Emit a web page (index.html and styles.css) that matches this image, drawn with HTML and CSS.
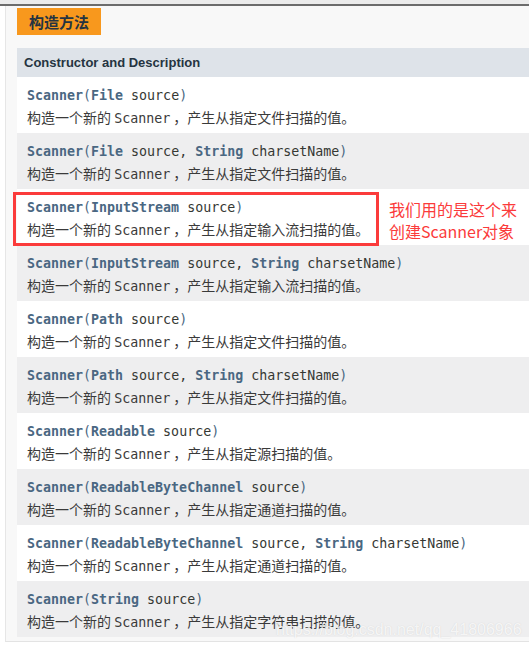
FILE: index.html
```html
<!DOCTYPE html>
<html lang="zh">
<head>
<meta charset="utf-8">
<title>Scanner 构造方法</title>
<link rel="stylesheet" href="styles.css">
</head>
<body>
<div class="topbar"></div>
<div class="page">
  <div class="tab">构造方法</div>
  <div class="table">
    <div class="head">Constructor and Description</div>
    <div class="row">
      <div class="sig"><b class="lk">Scanner</b><span class="lp">(</span><b class="lk">File</b> source<span class="lp">)</span></div>
      <div class="desc">构造一个新的 <code>Scanner</code> ，产生从指定文件扫描的值。</div>
    </div>
    <div class="row alt">
      <div class="sig"><b class="lk">Scanner</b><span class="lp">(</span><b class="lk">File</b> source, <b class="lk">String</b> charsetName<span class="lp">)</span></div>
      <div class="desc">构造一个新的 <code>Scanner</code> ，产生从指定文件扫描的值。</div>
    </div>
    <div class="row">
      <div class="sig"><b class="lk">Scanner</b><span class="lp">(</span><b class="lk">InputStream</b> source<span class="lp">)</span></div>
      <div class="desc">构造一个新的 <code>Scanner</code> ，产生从指定输入流扫描的值。</div>
    </div>
    <div class="row alt">
      <div class="sig"><b class="lk">Scanner</b><span class="lp">(</span><b class="lk">InputStream</b> source, <b class="lk">String</b> charsetName<span class="lp">)</span></div>
      <div class="desc">构造一个新的 <code>Scanner</code> ，产生从指定输入流扫描的值。</div>
    </div>
    <div class="row">
      <div class="sig"><b class="lk">Scanner</b><span class="lp">(</span><b class="lk">Path</b> source<span class="lp">)</span></div>
      <div class="desc">构造一个新的 <code>Scanner</code> ，产生从指定文件扫描的值。</div>
    </div>
    <div class="row alt">
      <div class="sig"><b class="lk">Scanner</b><span class="lp">(</span><b class="lk">Path</b> source, <b class="lk">String</b> charsetName<span class="lp">)</span></div>
      <div class="desc">构造一个新的 <code>Scanner</code> ，产生从指定文件扫描的值。</div>
    </div>
    <div class="row">
      <div class="sig"><b class="lk">Scanner</b><span class="lp">(</span><b class="lk">Readable</b> source<span class="lp">)</span></div>
      <div class="desc">构造一个新的 <code>Scanner</code> ，产生从指定源扫描的值。</div>
    </div>
    <div class="row alt">
      <div class="sig"><b class="lk">Scanner</b><span class="lp">(</span><b class="lk">ReadableByteChannel</b> source<span class="lp">)</span></div>
      <div class="desc">构造一个新的 <code>Scanner</code> ，产生从指定通道扫描的值。</div>
    </div>
    <div class="row">
      <div class="sig"><b class="lk">Scanner</b><span class="lp">(</span><b class="lk">ReadableByteChannel</b> source, <b class="lk">String</b> charsetName<span class="lp">)</span></div>
      <div class="desc">构造一个新的 <code>Scanner</code> ，产生从指定通道扫描的值。</div>
    </div>
    <div class="row alt">
      <div class="sig"><b class="lk">Scanner</b><span class="lp">(</span><b class="lk">String</b> source<span class="lp">)</span></div>
      <div class="desc">构造一个新的 <code>Scanner</code> ，产生从指定字符串扫描的值。</div>
    </div>
  </div>
</div>
<div class="mark-box"></div>
<div class="note">我们用的是这个来<br>创建Scanner对象</div>
<div class="watermark">https://blog.csdn.net/qq_41806966</div>
</body>
</html>
```
FILE: styles.css
```css
html, body {
  margin: 0;
  padding: 0;
  background: #ffffff;
}
body {
  position: relative;
  width: 529px;
  height: 653px;
  overflow: hidden;
  font-family: "Noto Sans CJK SC", "Liberation Sans", sans-serif;
}
.topbar {
  height: 4px;
  background: #ececec;
  border-bottom: 2px solid #6c6c6c;
}
.page {
  margin-left: 5px;
  border-left: 1px solid #e6e6e6;
  border-bottom: 1px solid #e3e3e3;
  background: #f8f8f8;
  padding: 2px 0 4px 11px;
}
.tab {
  display: inline-block;
  vertical-align: top;
  height: 27px;
  line-height: 27px;
  padding: 0 12px;
  background: #f8981d;
  color: #253441;
  font-family: "Noto Sans CJK SC", sans-serif;
  font-weight: bold;
  font-size: 15px;
}
.table {
  margin-top: 13px;
}
.head {
  height: 29px;
  line-height: 29px;
  background: #dee3e9;
  padding-left: 7px;
  font-family: "Liberation Sans", Arial, sans-serif;
  font-weight: bold;
  font-size: 13px;
  color: #253441;
}
.row {
  height: 56px;
  box-sizing: border-box;
  padding: 7px 3px 3px 10px;
  background: #ffffff;
  color: #353833;
}
.row.alt {
  background: #eeeeef;
}
.sig {
  height: 23px;
  line-height: 23px;
  font-family: "DejaVu Sans Mono", monospace;
  font-size: 13.3px;
  white-space: pre;
  color: #353833;
}
.lk {
  color: #4a6782;
  font-weight: bold;
}
.lp {
  color: #4a6782;
}
.desc {
  height: 21px;
  line-height: 21px;
  font-family: "Noto Sans CJK SC", sans-serif;
  font-size: 14px;
  color: #3a3a3a;
  white-space: nowrap;
}
.desc code {
  font-family: "DejaVu Sans Mono", monospace;
  font-size: 13.3px;
}
.mark-box {
  position: absolute;
  left: 13px;
  top: 192px;
  width: 360px;
  height: 48px;
  border: 3px solid #fb3b3b;
}
.note {
  position: absolute;
  left: 389px;
  top: 199px;
  font-family: "Noto Sans CJK SC", sans-serif;
  font-size: 16px;
  line-height: 21.5px;
  color: #fb3b3b;
}
.watermark {
  position: absolute;
  left: 276px;
  top: 621px;
  font-family: "Liberation Sans", Arial, sans-serif;
  font-size: 16px;
  color: rgba(255, 255, 255, 0.8);
  text-shadow: 0 0 1px rgba(150, 150, 150, 0.35);
  white-space: nowrap;
}
```
